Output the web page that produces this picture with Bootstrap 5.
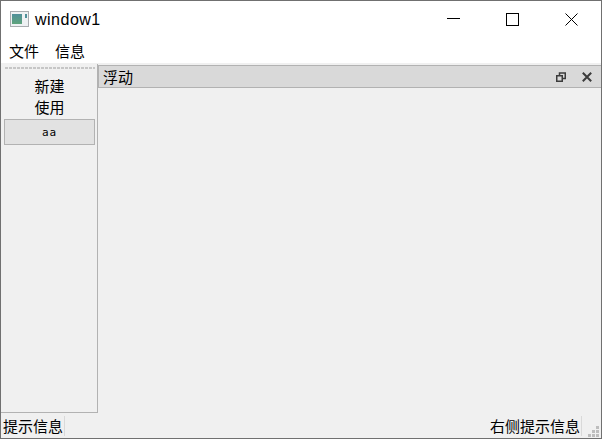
<!DOCTYPE html>
<html lang="zh">
<head>
    <meta charset="UTF-8">
    <meta name="viewport" content="width=device-width, initial-scale=1.0">
    <title>window1</title>
    <link href="https://cdn.jsdelivr.net/npm/bootstrap@5.3.3/dist/css/bootstrap.min.css" rel="stylesheet">
    <style>
        html, body { height: 100%; }
        body {
            margin: 0;
            background: #fff;
            overflow: hidden;
            font-family: "Noto Sans CJK SC", "Liberation Sans", sans-serif;
            font-size: 15px;
            color: #000;
        }
        .win-frame {
            height: 439px;
            border: 1px solid #707070;
            background: #f0f0f0;
        }
        .win-title { height: 36px; background: #fff; }
        .win-icon { margin-left: 9px; width: 19px; height: 16px; margin-top: -1px; }
        .win-name {
            margin-left: 6px;
            padding-top: 2px;
            font-family: "Liberation Sans", sans-serif;
            font-size: 16px;
            letter-spacing: 0.5px;
        }
        .win-btn { width: 59px; height: 31px; }
        .win-menu { height: 26px; background: #fff; padding: 1px 0 0 8px; gap: 16px; line-height: 26px; }
        .win-gap { height: 1px; background: #f0f0f0; }
        .tool-side {
            width: 97px;
            height: 349px;
            border-right: 1px solid #b2b2b2;
            border-bottom: 1px solid #b2b2b2;
            padding: 3px 2px 0 3px;
            text-align: center;
        }
        .tool-grip {
            height: 2px;
            margin: 0 0 6px 1px;
            background: repeating-linear-gradient(90deg, #c6c6c6 0 3px, transparent 3px 4px);
        }
        .tool-item { height: 21px; line-height: 21px; }
        .tool-active {
            height: 26px;
            margin-top: 2px;
            line-height: 25px;
            border: 1px solid #b2b2b2;
            background: #e2e2e2;
            font-family: "DejaVu Sans Mono", monospace;
            font-size: 11px;
            letter-spacing: 1px;
        }
        .dock-head {
            height: 23px;
            margin-top: 1px;
            background: #d9d9d9;
            border: 1px solid #b2b2b2;
            border-right: 0;
            padding-left: 4px;
            line-height: 22px;
        }
        .dock-body { background: #f0f0f0; }
        .dock-tool { display: block; }
        .dock-close { margin-left: 16px; margin-right: 9px; }
        .status-line { height: 25px; }
        .status-cell { padding: 0 1px 0 2px; border-right: 1px solid #d9d9d9; height: 20px; line-height: 20px; margin-top: 3px; }
        .size-grip { width: 19px; padding: 0 2px 1px 0; }
    </style>
</head>
<body>
    <div class="win-frame d-flex flex-column">
        <!-- title bar -->
        <div class="win-title d-flex align-items-center">
            <svg class="win-icon" viewBox="0 0 19 16">
                <defs>
                    <linearGradient id="iconFill" x1="0" y1="0" x2="0" y2="1">
                        <stop offset="0" stop-color="#4f8f9a"/>
                        <stop offset="1" stop-color="#5fa47c"/>
                    </linearGradient>
                </defs>
                <rect x="0.5" y="0.5" width="18" height="15" fill="#eef1f3" stroke="#a9acb0"/>
                <rect x="2" y="3" width="10" height="10" fill="url(#iconFill)"/>
                <rect x="15" y="3" width="2" height="4" fill="#4f8f9a"/>
            </svg>
            <span class="win-name">window1</span>
            <div class="ms-auto d-flex">
                <div class="win-btn d-flex align-items-center justify-content-center">
                    <svg width="13" height="13"><path d="M0 5.5H13" stroke="#000"/></svg>
                </div>
                <div class="win-btn d-flex align-items-center justify-content-center">
                    <svg width="13" height="13"><rect x="0.5" y="0.5" width="12" height="12" fill="none" stroke="#000"/></svg>
                </div>
                <div class="win-btn d-flex align-items-center justify-content-center">
                    <svg width="13" height="13"><path d="M0.5 0.5L12.5 12.5M12.5 0.5L0.5 12.5" stroke="#000" fill="none"/></svg>
                </div>
            </div>
        </div>

        <!-- menu -->
        <div class="win-menu d-flex">
            <span>文件</span>
            <span>信息</span>
        </div>
        <div class="win-gap"></div>

        <!-- main area -->
        <div class="d-flex flex-grow-1">
            <div class="tool-side flex-shrink-0">
                <div class="tool-grip"></div>
                <div class="tool-item">新建</div>
                <div class="tool-item">使用</div>
                <div class="tool-active">aa</div>
            </div>
            <div class="flex-grow-1 d-flex flex-column">
                <div class="dock-head d-flex align-items-center">
                    <span>浮动</span>
                    <div class="ms-auto d-flex align-items-center">
                        <svg class="dock-tool" width="10" height="10" viewBox="0 0 10 10">
                            <path d="M3.5 3V1H9.25V6.5H7" fill="none" stroke="#3c3c3c" stroke-width="1.5"/>
                            <rect x="0.75" y="3.75" width="5.5" height="5.5" fill="none" stroke="#3c3c3c" stroke-width="1.5"/>
                        </svg>
                        <svg class="dock-tool dock-close" width="10" height="10" viewBox="0 0 10 10">
                            <path d="M0.8 0.8L9.2 9.2M9.2 0.8L0.8 9.2" stroke="#3c3c3c" stroke-width="2"/>
                        </svg>
                    </div>
                </div>
                <div class="dock-body flex-grow-1"></div>
            </div>
        </div>

        <!-- status bar -->
        <div class="status-line d-flex">
            <div class="status-cell">提示信息</div>
            <div class="status-cell ms-auto">右侧提示信息</div>
            <div class="size-grip d-flex align-items-end justify-content-end">
                <svg width="11" height="11" viewBox="0 0 11 11">
                    <path d="M8 0h3v3H8zM4 4h3v3H4zM8 4h3v3H8zM0 8h3v3H0zM4 8h3v3H4zM8 8h3v3H8z" fill="#bdbdbd"/>
                </svg>
            </div>
        </div>
    </div>

    <script src="https://cdn.jsdelivr.net/npm/bootstrap@5.3.3/dist/js/bootstrap.bundle.min.js"></script>
</body>
</html>
